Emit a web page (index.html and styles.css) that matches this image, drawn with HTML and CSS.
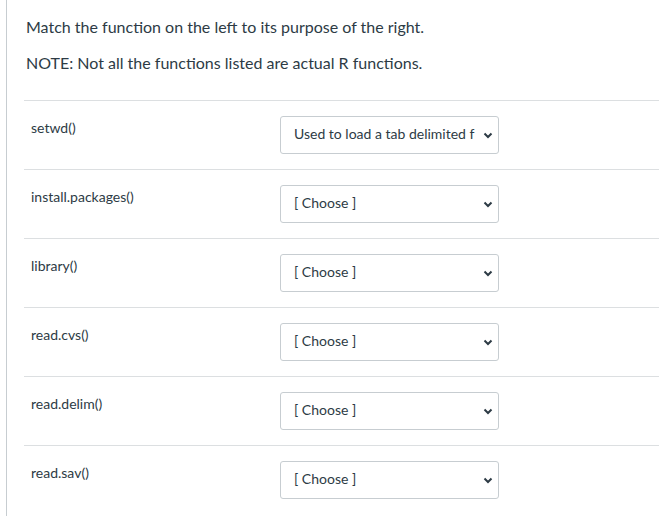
FILE: index.html
```html
<!DOCTYPE html>
<html>
<head>
<meta charset="utf-8">
<link rel="stylesheet" href="styles.css">
</head>
<body>
<div class="question">
  <div class="prompt">
    <p>Match the function on the left to its purpose of the right.</p>
    <p>NOTE: Not all the functions listed are actual R functions.</p>
  </div>
  <div class="rows">
    <div class="row">
      <div class="label">setwd()</div>
      <div class="select"><span class="value">Used to load a tab delimited f</span><svg class="chev" width="10" height="7" viewBox="0 0 10 7"><path d="M1.5 1.5 L5 5 L8.5 1.5" fill="none" stroke="#2d3b45" stroke-width="2"/></svg></div>
    </div>
    <div class="row">
      <div class="label">install.packages()</div>
      <div class="select"><span class="value">[ Choose ]</span><svg class="chev" width="10" height="7" viewBox="0 0 10 7"><path d="M1.5 1.5 L5 5 L8.5 1.5" fill="none" stroke="#2d3b45" stroke-width="2"/></svg></div>
    </div>
    <div class="row">
      <div class="label">library()</div>
      <div class="select"><span class="value">[ Choose ]</span><svg class="chev" width="10" height="7" viewBox="0 0 10 7"><path d="M1.5 1.5 L5 5 L8.5 1.5" fill="none" stroke="#2d3b45" stroke-width="2"/></svg></div>
    </div>
    <div class="row">
      <div class="label">read.cvs()</div>
      <div class="select"><span class="value">[ Choose ]</span><svg class="chev" width="10" height="7" viewBox="0 0 10 7"><path d="M1.5 1.5 L5 5 L8.5 1.5" fill="none" stroke="#2d3b45" stroke-width="2"/></svg></div>
    </div>
    <div class="row">
      <div class="label">read.delim()</div>
      <div class="select"><span class="value">[ Choose ]</span><svg class="chev" width="10" height="7" viewBox="0 0 10 7"><path d="M1.5 1.5 L5 5 L8.5 1.5" fill="none" stroke="#2d3b45" stroke-width="2"/></svg></div>
    </div>
    <div class="row">
      <div class="label">read.sav()</div>
      <div class="select"><span class="value">[ Choose ]</span><svg class="chev" width="10" height="7" viewBox="0 0 10 7"><path d="M1.5 1.5 L5 5 L8.5 1.5" fill="none" stroke="#2d3b45" stroke-width="2"/></svg></div>
    </div>
  </div>
</div>
</body>
</html>
```
FILE: styles.css
```css
html, body {
  margin: 0;
  padding: 0;
  background: #ffffff;
}
body {
  font-family: Lato, "Open Sans", "Liberation Sans", sans-serif;
  color: #2d3b45;
  overflow: hidden;
}
.question {
  margin-left: 6px;
  border-left: 1px solid #c7cdd1;
  height: 516px;
  padding-left: 17px;
  padding-right: 7px;
  box-sizing: border-box;
}
.prompt {
  padding-left: 2px;
  padding-top: 17px;
  padding-bottom: 27px;
}
.prompt p {
  margin: 0 0 16px 0;
  font-size: 16px;
  line-height: 20px;
}
.prompt p:last-child {
  margin-bottom: 0;
}
.row {
  display: flex;
  align-items: flex-start;
  border-top: 1px solid #dcdfe1;
  height: 68px;
}
.label {
  width: 249px;
  padding-left: 7px;
  padding-top: 17px;
  font-size: 14px;
  line-height: 20px;
}
.select {
  margin-top: 15px;
  width: 219px;
  height: 38px;
  box-sizing: border-box;
  border: 1px solid #c7cdd1;
  border-radius: 3px;
  display: flex;
  align-items: center;
  padding-left: 13px;
  padding-right: 5px;
  font-size: 14px;
}
.value {
  flex: 1;
  overflow: hidden;
  white-space: nowrap;
  padding-right: 8px;
  margin-bottom: 4px;
}
.chev {
  flex: none;
}
```
